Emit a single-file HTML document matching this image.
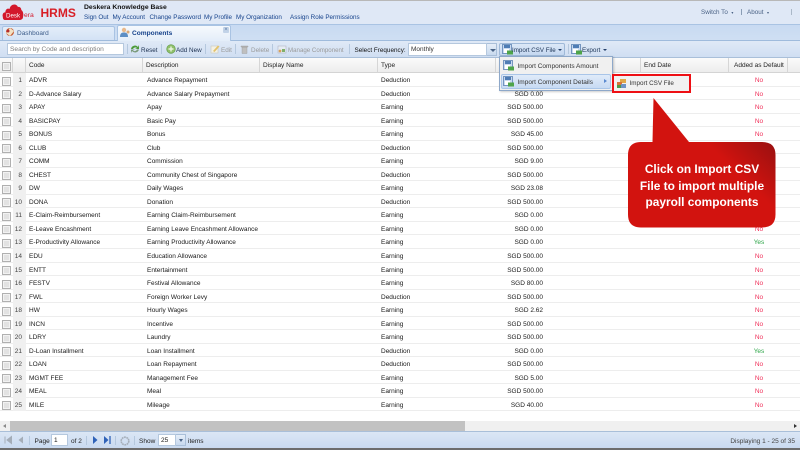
<!DOCTYPE html>
<html><head><meta charset="utf-8"><title>Components</title>
<style>
*{box-sizing:border-box}
html,body{margin:0;padding:0;width:800px;height:450px;overflow:hidden;background:#fff}
body{font-family:"Liberation Sans",sans-serif;font-size:6.5px;color:#1a1a1a;position:relative}
#w{position:absolute;left:0;top:0;width:800px;height:450px;filter:blur(.25px);overflow:hidden}
.a{position:absolute;white-space:nowrap}
.sep{position:absolute;width:1px;background:#b5c8de}
.hd{position:absolute;top:58px;height:15px;line-height:16.5px;background:linear-gradient(#fafafa,#ececec);border-right:1px solid #d6d6d6;border-bottom:1px solid #d4d4d4;padding-left:3px;color:#222}
.r{position:absolute;left:0;width:800px;height:13.54px;line-height:13.5px;border-bottom:1px solid #ededed}
.r span{position:absolute;top:1px;white-space:nowrap}
.r span.n{top:0;line-height:15.5px;left:13px;width:13px;height:13.54px;background:#f0f0f0;text-align:right;padding-right:4px;color:#444}
.r span.c{left:2px;top:3.5px;width:9px;height:9px;background:#e2e2e2;border:1px solid #b0b0b0;box-shadow:inset 0 0 0 1px #f2f2f2}
.cd{left:29px}.ds{left:147px}.ty{left:381px}
.am{right:257px;text-align:right}
.df{left:733px;width:52px;text-align:center;color:#f0305a}
.r span.y{color:#2fa64a}
.lk{color:#15428b;font-size:6.3px}
.tb{top:46px;line-height:9px;color:#1c3050;font-size:6.35px}
.dis{color:#9a9a9a}
</style></head><body><div id="w">
<!-- header -->
<div class="a" style="left:0;top:0;width:800px;height:1px;background:#b8b8b8"></div>
<div class="a" style="left:0;top:1px;width:800px;height:23px;background:#dfe8f6"></div>
<svg class="a" style="left:2px;top:3px" width="24" height="18" viewBox="0 0 24 18"><path transform="scale(.84 1)" d="M1 14C0 11 2 9 4 9.500C4 6 7 5 9 6C10 1 17 0 19 4C21 3.500 23 5 23 7C25 8 26 11 25 14C25 16 23 17 20 17H4C2 17 1 16 1 14Z" fill="#d3182b"/><text x="4" y="14.500" font-family="Liberation Sans" font-size="6.200" fill="#fff">Desk</text></svg>
<div class="a" style="left:24px;top:11.500px;font-size:6.8px;line-height:8px;color:#d3182b">era</div>
<div class="a" style="left:40.500px;top:5px;font-size:12px;line-height:16px;font-weight:bold;color:#d81f26">HRMS</div>
<div class="a" style="left:84px;top:3px;font-size:6.8px;line-height:9px;font-weight:bold;color:#111">Deskera Knowledge Base</div>
<div class="a lk" style="left:84px;top:12.500px;line-height:9px">Sign Out</div>
<div class="a lk" style="left:112.500px;top:12.500px;line-height:9px">My Account</div>
<div class="a lk" style="left:149.500px;top:12.500px;line-height:9px">Change Password</div>
<div class="a lk" style="left:204px;top:12.500px;line-height:9px">My Profile</div>
<div class="a lk" style="left:236px;top:12.500px;line-height:9px">My Organization</div>
<div class="a lk" style="left:290px;top:12.500px;line-height:9px">Assign Role Permissions</div>
<div class="a lk" style="left:701px;top:8px;line-height:9px;color:#4a6285">Switch To &nbsp;<span style="font-size:4px">▾</span></div>
<div class="sep" style="left:741px;top:9px;height:6px;background:#8a9db5"></div>
<div class="a lk" style="left:747px;top:8px;line-height:9px;color:#4a6285">About &nbsp;<span style="font-size:4px">▾</span></div>
<div class="sep" style="left:791px;top:9px;height:6px;background:#aab8c8"></div>
<!-- tabs -->
<div class="a" style="left:0;top:24px;width:800px;height:17px;background:linear-gradient(#c8daf2,#cfdff3);border-top:1px solid #a9c3e3;border-bottom:1px solid #9fbbdc"></div>
<div class="a" style="left:2px;top:26px;width:113px;height:14px;background:linear-gradient(#e3edf9,#d3e2f5);border:1px solid #a9c3e3;border-bottom:0;border-radius:2px 2px 0 0"></div>
<svg class="a" style="left:5px;top:27px" width="10" height="11" viewBox="0 0 10 11"><circle cx="5" cy="5" r="4" fill="#c8643c"/><path d="M1 6L5 1L9 4L5 9Z" fill="#f2e2c4"/><circle cx="3" cy="4" r="1.500" fill="#b52a2a"/></svg>
<div class="a" style="left:17px;top:28.500px;line-height:9px;color:#3d5c8a">Dashboard</div>
<div class="a" style="left:117px;top:25px;width:114px;height:16px;background:linear-gradient(#f6f9fd,#e3edf9);border:1px solid #a9c3e3;border-bottom:0;border-radius:2px 2px 0 0"></div>
<svg class="a" style="left:120px;top:27px" width="10" height="11" viewBox="0 0 10 11"><circle cx="4" cy="3" r="2.200" fill="#e8b98c"/><path d="M0 10C0 6 2 5.500 4 5.500C6 5.500 8 6 8 10Z" fill="#5d8ec4"/><circle cx="8" cy="5" r="1.500" fill="#d9a878"/></svg>
<div class="a" style="left:132px;top:28.500px;line-height:9px;font-weight:bold;color:#15428b;font-size:6.6px">Components</div>
<div class="a" style="left:223px;top:27px;width:6px;height:6px;background:#c2d3e8;border-radius:1px;line-height:6px;font-size:6px;text-align:center;color:#5a7aa5">×</div>
<!-- toolbar -->
<div class="a" style="left:0;top:41px;width:800px;height:17px;background:linear-gradient(#dfe9f6,#cfdef2);border-bottom:1px solid #a9bfd9"></div>
<div class="a" style="left:7px;top:43px;width:117px;height:12px;background:#fff;border:1px solid #b5c8de;line-height:11.500px;padding-left:2px;color:#7d7d7d;font-size:6.6px">Search by Code and description</div>
<div class="sep" style="left:127px;top:44px;height:10px"></div>
<svg class="a" style="left:130px;top:44px" width="10" height="10" viewBox="0 0 10 10"><path d="M1 5A4 4 0 0 1 8 3L9 1V5H5L7 4A2.500 2.500 0 0 0 3 5Z" fill="#4d9b3a"/><path d="M9 5.500A4 4 0 0 1 2 7L1 9V5.500H5L3 6.500A2.500 2.500 0 0 0 7 5.500Z" fill="#7a9a7a"/></svg>
<div class="a tb" style="left:141px">Reset</div>
<div class="sep" style="left:161px;top:44px;height:10px"></div>
<svg class="a" style="left:166px;top:44px" width="10" height="10" viewBox="0 0 10 10"><circle cx="5" cy="5" r="4.300" fill="#8fbf6a" stroke="#5f9a44" stroke-width=".6"/><path d="M5 2.500V7.500M2.500 5H7.500" stroke="#e9f4df" stroke-width="1.400"/></svg>
<div class="a tb" style="left:176px">Add New</div>
<div class="sep" style="left:205px;top:44px;height:10px"></div>
<svg class="a" style="left:210px;top:44px" width="10" height="10" viewBox="0 0 10 10"><rect x="1" y="2" width="7" height="7" fill="#f3f1e5" stroke="#c8c8bd" stroke-width=".6"/><path d="M3 7L8 1.500L9.500 2.500L4.500 8Z" fill="#e3c26b"/></svg>
<div class="a tb dis" style="left:221px">Edit</div>
<div class="sep" style="left:235px;top:44px;height:10px"></div>
<svg class="a" style="left:240px;top:44px" width="9" height="10" viewBox="0 0 9 10"><path d="M1 2H8V3H1ZM2 3H7V9.500H2Z" fill="#bfbfbf" stroke="#999" stroke-width=".4"/></svg>
<div class="a tb dis" style="left:251px">Delete</div>
<div class="sep" style="left:272px;top:44px;height:10px"></div>
<svg class="a" style="left:277px;top:44px" width="10" height="10" viewBox="0 0 10 10"><rect x="1" y="2" width="8" height="7" fill="#e6ecf3" stroke="#aab" stroke-width=".5"/><circle cx="3" cy="7" r="1.400" fill="#d8a15a"/><rect x="5" y="5" width="3" height="3" fill="#7fb06a"/></svg>
<div class="a tb dis" style="left:288px;font-size:6.15px">Manage Component</div>
<div class="sep" style="left:349px;top:44px;height:10px"></div>
<div class="a tb" style="left:354.500px;color:#111">Select Frequency:</div>
<div class="a" style="left:408px;top:43px;width:79px;height:13px;background:#fff;border:1px solid #b5c8de;line-height:12.500px;padding-left:2px;color:#333">Monthly</div>
<div class="a" style="left:487px;top:43px;width:10px;height:13px;background:linear-gradient(#e6eef8,#c8d9ee);border:1px solid #a9bfd9;border-left:0"></div>
<div class="a" style="left:489.500px;top:48.500px;width:0;height:0;border:3px solid transparent;border-top:3.500px solid #4a6488"></div>
<div class="a" style="left:499px;top:43px;width:66px;height:13px;background:linear-gradient(#dce8f7,#c4d7f0);border:1px solid #9fb9d8;border-radius:2px"></div>
<svg class="a ic" style="left:502px;top:44px" width="11" height="11" viewBox="0 0 11 11"><rect x=".5" y=".5" width="9" height="9" fill="#c9d9ef" stroke="#5d83b3" stroke-width=".8"/><rect x="2" y="1" width="6" height="3" fill="#4f7db5"/><rect x="2" y="5" width="5" height="4" fill="#fff"/><rect x="5" y="6.500" width="6" height="4" fill="#4fa44a"/></svg>
<div class="a tb" style="left:512px;color:#1d3557;font-size:6.2px">Import CSV File</div>
<div class="a" style="left:558px;top:48.500px;width:0;height:0;border:2px solid transparent;border-top:2.500px solid #24406a"></div>
<div class="sep" style="left:568px;top:44px;height:10px"></div>
<svg class="a" style="left:571px;top:44px" width="11" height="11" viewBox="0 0 11 11"><rect x=".5" y=".5" width="9" height="9" fill="#c9d9ef" stroke="#5d83b3" stroke-width=".8"/><rect x="2" y="1" width="6" height="3" fill="#4f7db5"/><rect x="2" y="5" width="5" height="4" fill="#fff"/><rect x="5" y="6.500" width="6" height="4" fill="#4fa44a"/></svg>
<div class="a tb" style="left:582px;color:#1d3557">Export</div>
<div class="a" style="left:603px;top:48.500px;width:0;height:0;border:2px solid transparent;border-top:2.500px solid #24406a"></div>
<!-- grid header -->
<div class="hd" style="left:0;width:13px"></div>
<div class="a" style="left:2px;top:62px;width:9px;height:9px;background:#e2e2e2;border:1px solid #b0b0b0;box-shadow:inset 0 0 0 1px #f2f2f2"></div>
<div class="hd" style="left:13px;width:13px"></div>
<div class="hd" style="left:26px;width:117px">Code</div>
<div class="hd" style="left:143px;width:117px">Description</div>
<div class="hd" style="left:260px;width:118px">Display Name</div>
<div class="hd" style="left:378px;width:118px">Type</div>
<div class="hd" style="left:496px;width:145px"></div>
<div class="hd" style="left:641px;width:88px">End Date</div>
<div class="hd" style="left:729px;width:59px;padding-left:5px">Added as Default</div>
<div class="hd" style="left:788px;width:12px;border-right:0"></div>
<!-- rows -->
<div class="a" style="left:0;top:73px;width:800px;height:348px">
<div class="r" style="top:0"><span class="c"></span><span class="n">1</span><span class="cd">ADVR</span><span class="ds">Advance Repayment</span><span class="ty">Deduction</span><span class="am">SGD 500.00</span><span class="df">No</span></div>
<div class="r" style="top:13.54px"><span class="c"></span><span class="n">2</span><span class="cd">D-Advance Salary</span><span class="ds">Advance Salary Prepayment</span><span class="ty">Deduction</span><span class="am">SGD 0.00</span><span class="df">No</span></div>
<div class="r" style="top:27.08px"><span class="c"></span><span class="n">3</span><span class="cd">APAY</span><span class="ds">Apay</span><span class="ty">Earning</span><span class="am">SGD 500.00</span><span class="df">No</span></div>
<div class="r" style="top:40.62px"><span class="c"></span><span class="n">4</span><span class="cd">BASICPAY</span><span class="ds">Basic Pay</span><span class="ty">Earning</span><span class="am">SGD 500.00</span><span class="df">No</span></div>
<div class="r" style="top:54.16px"><span class="c"></span><span class="n">5</span><span class="cd">BONUS</span><span class="ds">Bonus</span><span class="ty">Earning</span><span class="am">SGD 45.00</span><span class="df">No</span></div>
<div class="r" style="top:67.7px"><span class="c"></span><span class="n">6</span><span class="cd">CLUB</span><span class="ds">Club</span><span class="ty">Deduction</span><span class="am">SGD 500.00</span><span class="df">No</span></div>
<div class="r" style="top:81.24px"><span class="c"></span><span class="n">7</span><span class="cd">COMM</span><span class="ds">Commission</span><span class="ty">Earning</span><span class="am">SGD 9.00</span><span class="df">No</span></div>
<div class="r" style="top:94.78px"><span class="c"></span><span class="n">8</span><span class="cd">CHEST</span><span class="ds">Community Chest of Singapore</span><span class="ty">Deduction</span><span class="am">SGD 500.00</span><span class="df">No</span></div>
<div class="r" style="top:108.32px"><span class="c"></span><span class="n">9</span><span class="cd">DW</span><span class="ds">Daily Wages</span><span class="ty">Earning</span><span class="am">SGD 23.08</span><span class="df">No</span></div>
<div class="r" style="top:121.86px"><span class="c"></span><span class="n">10</span><span class="cd">DONA</span><span class="ds">Donation</span><span class="ty">Deduction</span><span class="am">SGD 500.00</span><span class="df">No</span></div>
<div class="r" style="top:135.4px"><span class="c"></span><span class="n">11</span><span class="cd">E-Claim-Reimbursement</span><span class="ds">Earning Claim-Reimbursement</span><span class="ty">Earning</span><span class="am">SGD 0.00</span><span class="df">No</span></div>
<div class="r" style="top:148.94px"><span class="c"></span><span class="n">12</span><span class="cd">E-Leave Encashment</span><span class="ds">Earning Leave Encashment Allowance</span><span class="ty">Earning</span><span class="am">SGD 0.00</span><span class="df">No</span></div>
<div class="r" style="top:162.48px"><span class="c"></span><span class="n">13</span><span class="cd">E-Productivity Allowance</span><span class="ds">Earning Productivity Allowance</span><span class="ty">Earning</span><span class="am">SGD 0.00</span><span class="df y">Yes</span></div>
<div class="r" style="top:176.02px"><span class="c"></span><span class="n">14</span><span class="cd">EDU</span><span class="ds">Education Allowance</span><span class="ty">Earning</span><span class="am">SGD 500.00</span><span class="df">No</span></div>
<div class="r" style="top:189.56px"><span class="c"></span><span class="n">15</span><span class="cd">ENTT</span><span class="ds">Entertainment</span><span class="ty">Earning</span><span class="am">SGD 500.00</span><span class="df">No</span></div>
<div class="r" style="top:203.1px"><span class="c"></span><span class="n">16</span><span class="cd">FESTV</span><span class="ds">Festival Allowance</span><span class="ty">Earning</span><span class="am">SGD 80.00</span><span class="df">No</span></div>
<div class="r" style="top:216.64px"><span class="c"></span><span class="n">17</span><span class="cd">FWL</span><span class="ds">Foreign Worker Levy</span><span class="ty">Deduction</span><span class="am">SGD 500.00</span><span class="df">No</span></div>
<div class="r" style="top:230.18px"><span class="c"></span><span class="n">18</span><span class="cd">HW</span><span class="ds">Hourly Wages</span><span class="ty">Earning</span><span class="am">SGD 2.62</span><span class="df">No</span></div>
<div class="r" style="top:243.72px"><span class="c"></span><span class="n">19</span><span class="cd">INCN</span><span class="ds">Incentive</span><span class="ty">Earning</span><span class="am">SGD 500.00</span><span class="df">No</span></div>
<div class="r" style="top:257.26px"><span class="c"></span><span class="n">20</span><span class="cd">LDRY</span><span class="ds">Laundry</span><span class="ty">Earning</span><span class="am">SGD 500.00</span><span class="df">No</span></div>
<div class="r" style="top:270.8px"><span class="c"></span><span class="n">21</span><span class="cd">D-Loan Installment</span><span class="ds">Loan Installment</span><span class="ty">Deduction</span><span class="am">SGD 0.00</span><span class="df y">Yes</span></div>
<div class="r" style="top:284.34px"><span class="c"></span><span class="n">22</span><span class="cd">LOAN</span><span class="ds">Loan Repayment</span><span class="ty">Deduction</span><span class="am">SGD 500.00</span><span class="df">No</span></div>
<div class="r" style="top:297.88px"><span class="c"></span><span class="n">23</span><span class="cd">MGMT FEE</span><span class="ds">Management Fee</span><span class="ty">Earning</span><span class="am">SGD 5.00</span><span class="df">No</span></div>
<div class="r" style="top:311.42px"><span class="c"></span><span class="n">24</span><span class="cd">MEAL</span><span class="ds">Meal</span><span class="ty">Earning</span><span class="am">SGD 500.00</span><span class="df">No</span></div>
<div class="r" style="top:324.96px"><span class="c"></span><span class="n">25</span><span class="cd">MILE</span><span class="ds">Mileage</span><span class="ty">Earning</span><span class="am">SGD 40.00</span><span class="df">No</span></div>
</div>
<!-- scrollbar -->
<div class="a" style="left:0;top:421px;width:800px;height:10px;background:#f0f0f0"></div>
<div class="a" style="left:10px;top:421px;width:455px;height:10px;background:#c2c2c2"></div>
<div class="a" style="left:3px;top:424px;width:0;height:0;border:2px solid transparent;border-right:3px solid #8a8a8a;border-left:0"></div>
<div class="a" style="left:794px;top:424px;width:0;height:0;border:2px solid transparent;border-left:3px solid #333;border-right:0"></div>
<!-- pager -->
<div class="a" style="left:0;top:431px;width:800px;height:17px;background:linear-gradient(#dbe6f5,#c9daf0);border-top:1px solid #a9bfd9"></div>
<div class="a" style="left:0;top:448px;width:800px;height:2px;background:#6d6d6d"></div>
<svg class="a" style="left:3px;top:435px" width="30" height="10" viewBox="0 0 30 10"><path d="M2 1.500V8.500M8.500 1.500L4 5L8.500 8.500Z" fill="#a4adb8" stroke="#a4adb8"/><path d="M20 1.500L15.500 5L20 8.500Z" fill="#a4adb8"/></svg>
<div class="sep" style="left:29px;top:436px;height:9px"></div>
<div class="a" style="left:34.500px;top:436.500px;line-height:9.500px;color:#222">Page</div>
<div class="a" style="left:51px;top:434px;width:17px;height:12px;background:#fff;border:1px solid #b5c8de;line-height:11px;padding-left:2px">1</div>
<div class="a" style="left:71px;top:436.500px;line-height:9.500px;color:#222">of 2</div>
<div class="sep" style="left:86px;top:436px;height:9px"></div>
<svg class="a" style="left:90px;top:435px" width="22" height="10" viewBox="0 0 22 10"><path d="M3 1L7.500 5L3 9Z" fill="#2f62b8"/><path d="M14 1L18.500 5L14 9Z" fill="#2f62b8"/><path d="M20 1V9" stroke="#2f62b8" stroke-width="1.300"/></svg>
<div class="sep" style="left:115px;top:436px;height:9px"></div>
<svg class="a" style="left:119px;top:434.500px" width="12" height="12" viewBox="0 0 12 12"><circle cx="6" cy="6" r="3.800" fill="none" stroke="#a5aeb9" stroke-width="1.600" stroke-dasharray="1.800 .6"/></svg>
<div class="sep" style="left:134px;top:436px;height:9px"></div>
<div class="a" style="left:139px;top:436.500px;line-height:9.500px;color:#222">Show</div>
<div class="a" style="left:158px;top:434px;width:18px;height:12px;background:#fff;border:1px solid #b5c8de;line-height:11px;padding-left:2px">25</div>
<div class="a" style="left:176px;top:434px;width:10px;height:12px;background:linear-gradient(#e6eef8,#c8d9ee);border:1px solid #a9bfd9;border-left:0"></div>
<div class="a" style="left:178.500px;top:439px;width:0;height:0;border:2.500px solid transparent;border-top:3px solid #4a6488"></div>
<div class="a" style="left:188px;top:436.500px;line-height:9.500px;color:#222">items</div>
<div class="a" style="right:5px;top:436.500px;line-height:9.500px;color:#444">Displaying 1 - 25 of 35</div>
<!-- menu -->
<div class="a" style="left:499px;top:56px;width:114px;height:35px;background:#f0f0f0;border:1px solid #8ea8c9;box-shadow:1px 1px 2px rgba(0,0,0,.2)"></div>
<div class="a" style="left:501px;top:74px;width:110px;height:15px;background:linear-gradient(#e0ebf9,#c7daf3);border:1px solid #a9c5e8;border-radius:2px"></div>
<svg class="a" style="left:503px;top:60px" width="11" height="11" viewBox="0 0 11 11"><rect x=".5" y=".5" width="9" height="9" fill="#c9d9ef" stroke="#5d83b3" stroke-width=".8"/><rect x="2" y="1" width="6" height="3" fill="#4f7db5"/><rect x="2" y="5" width="5" height="4" fill="#fff"/><rect x="5" y="6.500" width="6" height="4" fill="#4fa44a"/></svg>
<div class="a" style="left:517.500px;top:62px;line-height:9px;font-size:6.5px;color:#333">Import Components Amount</div>
<svg class="a" style="left:503px;top:76px" width="11" height="11" viewBox="0 0 11 11"><rect x=".5" y=".5" width="9" height="9" fill="#c9d9ef" stroke="#5d83b3" stroke-width=".8"/><rect x="2" y="1" width="6" height="3" fill="#4f7db5"/><rect x="2" y="5" width="5" height="4" fill="#fff"/><rect x="5" y="6.500" width="6" height="4" fill="#4fa44a"/></svg>
<div class="a" style="left:517.500px;top:77.500px;line-height:9px;font-size:6.5px;color:#333">Import Component Details</div>
<div class="a" style="left:604px;top:79px;width:0;height:0;border:2.500px solid transparent;border-left:3.500px solid #5b8ad0;border-right:0"></div>
<div class="a" style="left:612px;top:74px;width:79px;height:19px;background:#f1f1f1;border:2px solid #ee0f14"></div>
<svg class="a" style="left:616px;top:78px" width="11" height="11" viewBox="0 0 11 11"><rect x="4" y="1" width="6" height="4" fill="#e2a848"/><rect x="1" y="4" width="5" height="3" fill="#d9713a"/><rect x="1" y="7" width="4" height="3" fill="#4c9a46"/><rect x="5" y="6" width="5" height="4" fill="#6f93c4"/></svg>
<div class="a" style="left:629.500px;top:79px;line-height:9px;font-size:6.3px;color:#333">Import CSV File</div>
<!-- callout -->
<svg class="a" style="left:620px;top:92px" width="165" height="142" viewBox="620 92 165 142"><defs><linearGradient id="g" x1="0" y1="1" x2="1" y2="0.100"><stop offset="0" stop-color="#d2130f"/><stop offset=".62" stop-color="#d2130f"/><stop offset="1" stop-color="#7e0f10"/></linearGradient></defs><path d="M653.500 98L689 142H762Q775.500 142 775.500 155V214.500Q775.500 227.500 762 227.500H641Q628 227.500 628 214.500V155Q628 142 641 142H652.500Z" fill="url(#g)"/></svg>
<div class="a" style="left:628px;top:161px;width:148px;text-align:center;color:#fff;font-weight:bold;font-size:11.9px;line-height:16.500px;white-space:normal">Click on Import CSV<br>File to import multiple<br>payroll components</div>
</div></body></html>
